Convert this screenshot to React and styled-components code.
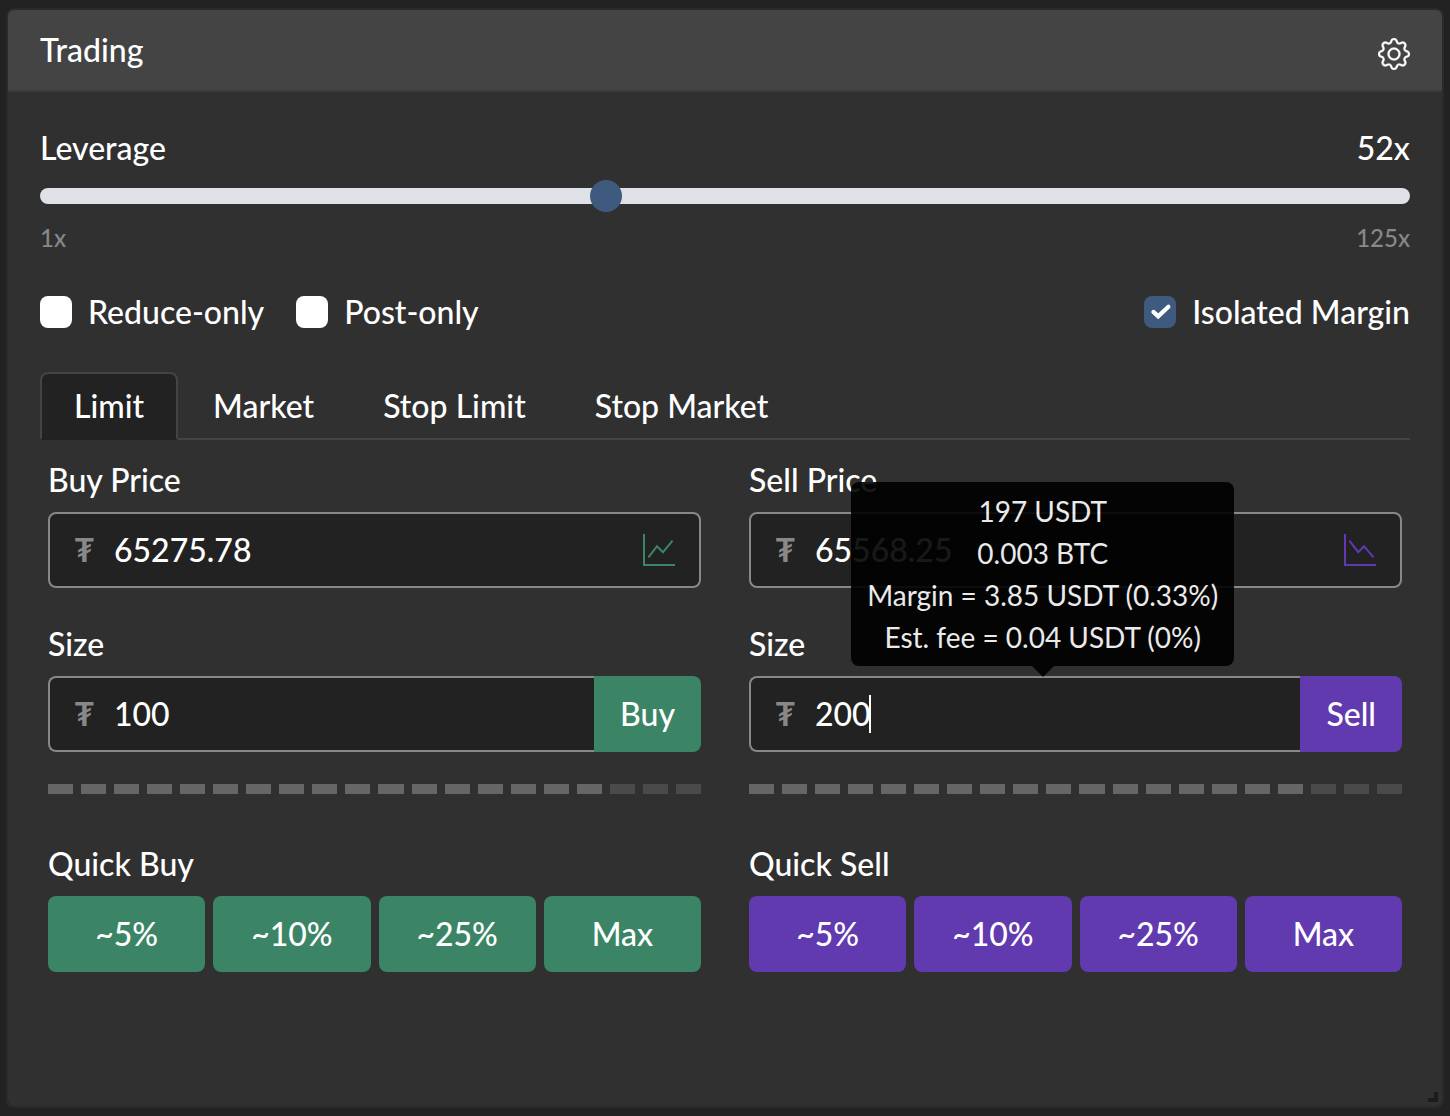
import React, { useState } from "react";
import styled, { createGlobalStyle } from "styled-components";
import { BsGear } from "react-icons/bs";

const TABS = ["Limit", "Market", "Stop Limit", "Stop Market"];
const QUICK = ["~5%", "~10%", "~25%", "Max"];
const SEGMENTS = 20;

const ChartIcon = ({ down }) => (
  <svg width="32" height="32" viewBox="0 0 32 32" fill="none" stroke="currentColor" strokeWidth="2" aria-hidden="true">
    <path d="M1 0v31h31" />
    <path d={down ? "M5.4 6.6 14.2 18.2 20 12.2 29.6 23.4" : "M5.4 23.4 14 12.2 20 18.2 29.6 6.6"} />
  </svg>
);

const Check = ({ id, label, checked, onChange }) => (
  <CheckLabel htmlFor={id}>
    <CheckBox>
      <input id={id} type="checkbox" checked={checked} onChange={(e) => onChange(e.target.checked)} />
      {checked && (
        <svg width="32" height="32" viewBox="0 0 32 32" aria-hidden="true">
          <path d="M9.4 15.9 14.2 20.4 24.4 10.8" fill="none" stroke="#fff" strokeWidth="4.2" strokeLinecap="round" />
        </svg>
      )}
    </CheckBox>
    {label}
  </CheckLabel>
);

const OrderSide = ({ side, price, size, filled, color, active, children }) => {
  const [priceValue, setPriceValue] = useState(price);
  const [sizeValue, setSizeValue] = useState(size);
  const key = side.toLowerCase();

  return (
    <Side>
      <FieldLabel htmlFor={`${key}-price`}>{side} Price</FieldLabel>
      <InputGroup>
        <FieldBox>
          <Currency>₮</Currency>
          <Field id={`${key}-price`} value={priceValue} onChange={(e) => setPriceValue(e.target.value)} />
          <ChartButton type="button" $color={color} aria-label={`Use market ${key} price`}>
            <ChartIcon down={side === "Sell"} />
          </ChartButton>
        </FieldBox>
      </InputGroup>

      <FieldLabel htmlFor={`${key}-size`}>Size</FieldLabel>
      <InputGroup>
        <FieldBox $joined>
          <Currency>₮</Currency>
          <Field
            id={`${key}-size`}
            $fit={active}
            value={sizeValue}
            onChange={(e) => setSizeValue(e.target.value)}
          />
          {active && <Caret />}
          {children}
        </FieldBox>
        <SubmitButton type="button" $color={color}>
          {side}
        </SubmitButton>
      </InputGroup>

      <Meter>
        {Array.from({ length: SEGMENTS }, (_, i) => (
          <Segment key={i} $on={i < filled} />
        ))}
      </Meter>

      <QuickTitle>Quick {side}</QuickTitle>
      <QuickRow>
        {QUICK.map((text) => (
          <QuickButton key={text} type="button" $color={color}>
            {text}
          </QuickButton>
        ))}
      </QuickRow>
    </Side>
  );
};

const App = () => {
  const [leverage, setLeverage] = useState(52);
  const [reduceOnly, setReduceOnly] = useState(false);
  const [postOnly, setPostOnly] = useState(false);
  const [isolated, setIsolated] = useState(true);
  const [tab, setTab] = useState("Limit");

  return (
    <>
      <GlobalStyle />
      <Card>
        <Header>
          <Title>Trading</Title>
          <IconButton type="button" aria-label="Settings">
            <BsGear size={32} strokeWidth={0.15} />
          </IconButton>
        </Header>
        <Body>
          <SpreadRow>
            <label htmlFor="leverage">Leverage</label>
            <span>{leverage}x</span>
          </SpreadRow>
          <Slider
            id="leverage"
            type="range"
            min="1"
            max="125"
            value={leverage}
            onChange={(e) => setLeverage(Number(e.target.value))}
          />
          <RangeRow>
            <span>1x</span>
            <span>125x</span>
          </RangeRow>

          <OptionRow>
            <Check id="reduce-only" label="Reduce-only" checked={reduceOnly} onChange={setReduceOnly} />
            <Check id="post-only" label="Post-only" checked={postOnly} onChange={setPostOnly} />
            <Spacer />
            <Check id="isolated" label="Isolated Margin" checked={isolated} onChange={setIsolated} />
          </OptionRow>

          <Tabs role="tablist">
            {TABS.map((name) => (
              <Tab
                key={name}
                type="button"
                role="tab"
                aria-selected={tab === name}
                $active={tab === name}
                onClick={() => setTab(name)}
              >
                {name}
              </Tab>
            ))}
          </Tabs>

          <Sides>
            <OrderSide side="Buy" price="65275.78" size="100" filled={17} color="#3b8566" />
            <OrderSide side="Sell" price="65568.25" size="200" filled={17} color="#613aaf" active>
              <TooltipAnchor>
                <Tooltip role="tooltip">
                  <div>197 USDT</div>
                  <div>0.003 BTC</div>
                  <div>Margin = 3.85 USDT (0.33%)</div>
                  <div>Est. fee = 0.04 USDT (0%)</div>
                </Tooltip>
              </TooltipAnchor>
            </OrderSide>
          </Sides>
        </Body>
        <ResizeHandle />
      </Card>
    </>
  );
};

export default App;

const GlobalStyle = createGlobalStyle`
  * {
    box-sizing: border-box;
  }

  body {
    margin: 0;
    background: #222;
    color: #fff;
    font-family: Lato, sans-serif;
    font-size: 32px;
    font-weight: 500;
    line-height: 48px;
  }

  button,
  input {
    font: inherit;
    color: inherit;
    margin: 0;
  }

  button {
    cursor: pointer;
  }
`;

const Card = styled.section`
  position: relative;
  margin: 8px 6px;
  min-height: calc(100vh - 16px);
  background: #303030;
  background-clip: padding-box;
  border: 2px solid #2a2a2a;
  border-radius: 8px;
`;

const Header = styled.header`
  display: flex;
  justify-content: space-between;
  align-items: flex-end;
  padding: 16px 32px;
  background: #444;
  border-bottom: 2px solid #3b3b3b;
  border-radius: 6px 6px 0 0;
`;

const Title = styled.h1`
  margin: 0;
  font-size: 32px;
  font-weight: 500;
`;

const IconButton = styled.button`
  display: flex;
  align-items: center;
  height: 40px;
  padding: 0;
  background: none;
  border: none;
`;

const Body = styled.div`
  padding: 32px;
`;

const SpreadRow = styled.div`
  display: flex;
  justify-content: space-between;
`;

const RangeRow = styled(SpreadRow)`
  color: #888;
  font-size: 24px;
  line-height: 36px;
`;

const Slider = styled.input`
  appearance: none;
  display: block;
  width: 100%;
  height: 32px;
  margin: 8px 0;
  background: none;

  &::-webkit-slider-runnable-track {
    height: 16px;
    background: #dee2e6;
    border-radius: 8px;
  }

  &::-webkit-slider-thumb {
    appearance: none;
    width: 32px;
    height: 32px;
    margin-top: -8px;
    background: #3f5a7f;
    border-radius: 50%;
  }
`;

const OptionRow = styled.div`
  display: flex;
  gap: 32px;
  margin: 32px 0 36px;
`;

const Spacer = styled.div`
  flex: 1;
`;

const CheckLabel = styled.label`
  display: flex;
  align-items: center;
  gap: 16px;
`;

const CheckBox = styled.span`
  display: grid;
  width: 32px;
  height: 32px;

  > * {
    grid-area: 1 / 1;
  }

  input {
    appearance: none;
    width: 32px;
    height: 32px;
    background: #fff;
    border-radius: 8px;
  }

  input:checked {
    background: #3f5a7f;
  }

  svg {
    pointer-events: none;
    z-index: 1;
  }
`;

const Tabs = styled.div`
  display: flex;
  gap: 1px;
  box-shadow: inset 0 -2px #444;
`;

const Tab = styled.button`
  padding: 8px 32px;
  background: ${({ $active }) => ($active ? "#222" : "transparent")};
  border: 2px solid ${({ $active }) => ($active ? "#444" : "transparent")};
  border-bottom-color: ${({ $active }) => ($active ? "#222" : "transparent")};
  border-radius: 8px 8px 0 0;
`;

const Sides = styled.div`
  display: grid;
  grid-template-columns: 1fr 1fr;
  gap: 48px;
  padding: 16px 8px 0;
`;

const Side = styled.div`
  min-width: 0;
`;

const FieldLabel = styled.label`
  display: block;
  margin-bottom: 8px;
`;

const InputGroup = styled.div`
  display: flex;
  margin-bottom: 32px;
`;

const FieldBox = styled.div`
  position: relative;
  display: flex;
  flex: 1;
  align-items: center;
  min-width: 0;
  height: 76px;
  padding: 0 24px;
  background: #222;
  border: 2px solid #888;
  border-right-width: ${({ $joined }) => ($joined ? "0" : "2px")};
  border-radius: ${({ $joined }) => ($joined ? "8px 0 0 8px" : "8px")};
`;

const Currency = styled.span`
  width: 40px;
  color: #888;
  font-weight: 700;
`;

const Field = styled.input`
  flex: ${({ $fit }) => ($fit ? "none" : "1")};
  field-sizing: ${({ $fit }) => ($fit ? "content" : "fixed")};
  min-width: 0;
  padding: 0;
  background: none;
  border: none;
  outline: none;
`;

const Caret = styled.span`
  width: 2px;
  height: 38px;
  margin-left: -2px;
  background: #fff;
`;

const ChartButton = styled.button`
  display: flex;
  padding: 0;
  background: none;
  border: none;
  color: ${({ $color }) => $color};
`;

const ColorButton = styled.button`
  height: 76px;
  background: ${({ $color }) => $color};
  border: none;
  border-radius: 8px;
`;

const SubmitButton = styled(ColorButton)`
  padding: 0 26px;
  border-radius: 0 8px 8px 0;
`;

const Meter = styled.div`
  display: flex;
  gap: 8px;
  margin-bottom: 46px;
`;

const Segment = styled.span`
  flex: 1;
  height: 10px;
  background: ${({ $on }) => ($on ? "#666" : "#4a4a4a")};
`;

const QuickTitle = styled.div`
  margin-bottom: 8px;
`;

const QuickRow = styled.div`
  display: grid;
  grid-template-columns: repeat(4, 1fr);
  gap: 8px;
`;

const QuickButton = styled(ColorButton)`
  padding: 0;
`;

const TooltipAnchor = styled.div`
  position: absolute;
  left: 34px;
  right: 0;
  bottom: 100%;
  display: flex;
  justify-content: center;
  padding-bottom: 12px;
  pointer-events: none;
`;

const Tooltip = styled.div`
  position: relative;
  padding: 8px 16px;
  background: #000;
  border-radius: 8px;
  font-size: 28px;
  font-weight: 400;
  line-height: 42px;
  text-align: center;
  white-space: nowrap;
  opacity: 0.9;

  &::after {
    content: "";
    position: absolute;
    top: 100%;
    left: 50%;
    margin-left: -11px;
    border: 11px solid transparent;
    border-top-color: #000;
    border-bottom: none;
  }
`;

const ResizeHandle = styled.span`
  position: absolute;
  right: 4px;
  bottom: 4px;
  width: 10px;
  height: 10px;
  border: solid #1c1c1c;
  border-width: 0 4px 4px 0;
  cursor: se-resize;
`;
